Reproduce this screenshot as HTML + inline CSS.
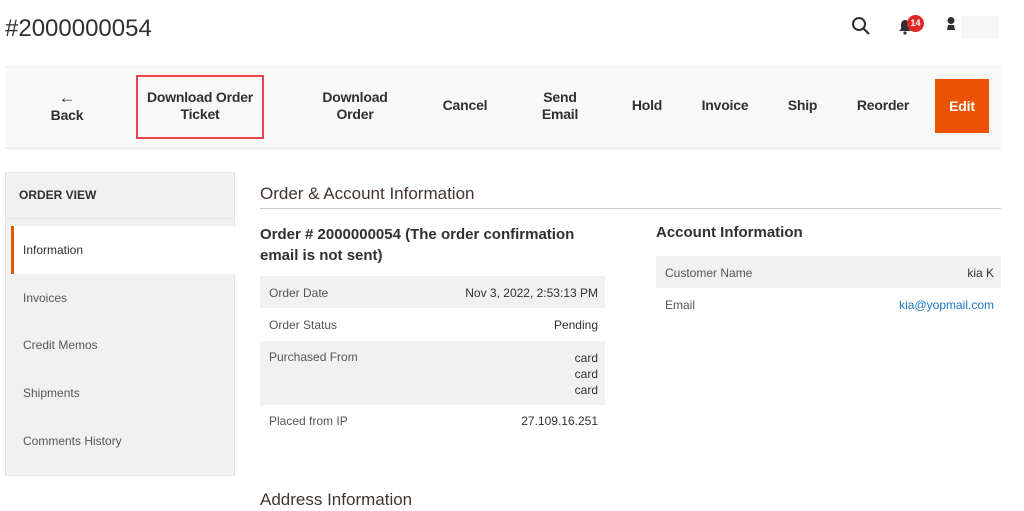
<!DOCTYPE html>
<html><head><style>
body{margin:0;width:1024px;height:511px;overflow:hidden;background:#fff;font-family:"Liberation Sans",sans-serif;color:#41362f;position:relative}
.a{position:absolute}
.tb{font-size:14px;color:#303030;text-align:center;line-height:17px;font-weight:bold;letter-spacing:-0.2px}
.side{font-size:12px;color:#303030}
.r{font-size:12px;color:#555}
</style></head><body>
<div class="a" style="left:5px;top:15px;font-size:24px;color:#303030">#2000000054</div>
<svg class="a" style="left:851px;top:16px" width="20" height="20" viewBox="0 0 20 20"><circle cx="8" cy="8" r="6" fill="none" stroke="#303030" stroke-width="2"/><line x1="12.5" y1="12.5" x2="18" y2="18" stroke="#303030" stroke-width="2.2"/></svg>
<svg class="a" style="left:898px;top:19px" width="14" height="16" viewBox="0 0 14 16"><path d="M7 1C4 1 3 4 3 6v4L1 12h12l-2-2V6c0-2-1-5-4-5z" fill="#303030"/><circle cx="7" cy="14" r="1.6" fill="#303030"/></svg>
<div class="a" style="left:907px;top:15px;width:17px;height:17px;border-radius:50%;background:#e22626;color:#fff;font-size:9px;font-weight:bold;text-align:center;line-height:17px">14</div>
<svg class="a" style="left:943px;top:16px" width="16" height="16" viewBox="0 0 16 16"><circle cx="8" cy="4.5" r="3.5" fill="#303030"/><path d="M5 9h6l1 5H4z" fill="#303030"/></svg>
<div class="a" style="left:961px;top:16px;width:38px;height:22px;background:#f6f6f6"></div>

<div class="a" style="left:5px;top:66px;width:996px;height:81px;background:#f8f8f8;border-top:1px solid #eee;border-bottom:1px solid #e6e6e6"></div>
<div class="a tb" style="left:42px;top:89px;width:50px"><span style="font-size:17px;font-weight:normal">&#8592;</span><br>Back</div>
<div class="a" style="left:136px;top:75px;width:124px;height:60px;border:2px solid #e8454a"></div>
<div class="a tb" style="left:138px;top:89px;width:124px">Download Order<br>Ticket</div>
<div class="a tb" style="left:310px;top:89px;width:90px">Download<br>Order</div>
<div class="a tb" style="left:430px;top:97px;width:70px">Cancel</div>
<div class="a tb" style="left:530px;top:89px;width:60px">Send<br>Email</div>
<div class="a tb" style="left:620px;top:97px;width:54px">Hold</div>
<div class="a tb" style="left:695px;top:97px;width:60px">Invoice</div>
<div class="a tb" style="left:775px;top:97px;width:55px">Ship</div>
<div class="a tb" style="left:848px;top:97px;width:70px">Reorder</div>
<div class="a tb" style="left:935px;top:79px;width:54px;height:54px;background:#eb5202;color:#fff;line-height:54px">Edit</div>

<div class="a" style="left:5px;top:172px;width:230px;height:304px;background:#f1f1f1;border:1px solid #e3e3e3;box-sizing:border-box"></div>
<div class="a side" style="left:19px;top:188px;font-weight:bold;color:#303030">ORDER VIEW</div>
<div class="a" style="left:6px;top:218px;width:229px;height:1px;background:#e3e3e3"></div>
<div class="a" style="left:11px;top:226px;width:224px;height:48px;background:#fff;border-left:3px solid #eb5202;box-sizing:border-box"></div>
<div class="a side" style="left:23px;top:243px">Information</div>
<div class="a side" style="left:23px;top:291px;color:#555">Invoices</div>
<div class="a side" style="left:23px;top:338px;color:#555">Credit Memos</div>
<div class="a side" style="left:23px;top:386px;color:#555">Shipments</div>
<div class="a side" style="left:23px;top:434px;color:#555">Comments History</div>

<div class="a" style="left:260px;top:184px;font-size:17px;color:#41362f">Order &amp; Account Information</div>
<div class="a" style="left:260px;top:208px;width:741px;height:1px;background:#ccc"></div>
<div class="a" style="left:260px;top:224px;font-size:15px;font-weight:bold;color:#303030;line-height:21px">Order # 2000000054 (The order confirmation<br>email is not sent)</div>
<div class="a" style="left:260px;top:276px;width:345px;height:32px;background:#f1f1f1"></div>
<div class="a" style="left:260px;top:341px;width:345px;height:64px;background:#f1f1f1"></div>
<div class="a r" style="left:269px;top:286px">Order Date</div>
<div class="a r" style="right:426px;top:286px;color:#303030">Nov 3, 2022, 2:53:13 PM</div>
<div class="a r" style="left:269px;top:318px">Order Status</div>
<div class="a r" style="right:426px;top:318px;color:#303030">Pending</div>
<div class="a r" style="left:269px;top:350px">Purchased From</div>
<div class="a r" style="right:426px;top:350px;color:#303030;text-align:right;line-height:16px">card<br>card<br>card</div>
<div class="a r" style="left:269px;top:414px">Placed from IP</div>
<div class="a r" style="right:426px;top:414px;color:#303030">27.109.16.251</div>

<div class="a" style="left:656px;top:224px;font-size:15px;font-weight:bold;color:#303030">Account Information</div>
<div class="a" style="left:656px;top:256px;width:345px;height:32px;background:#f1f1f1"></div>
<div class="a r" style="left:665px;top:266px">Customer Name</div>
<div class="a r" style="right:30px;top:266px;color:#303030">kia K</div>
<div class="a r" style="left:665px;top:298px">Email</div>
<div class="a r" style="right:30px;top:298px;color:#1979c3">kia@yopmail.com</div>

<div class="a" style="left:260px;top:490px;font-size:17px;color:#41362f">Address Information</div>
</body></html>
